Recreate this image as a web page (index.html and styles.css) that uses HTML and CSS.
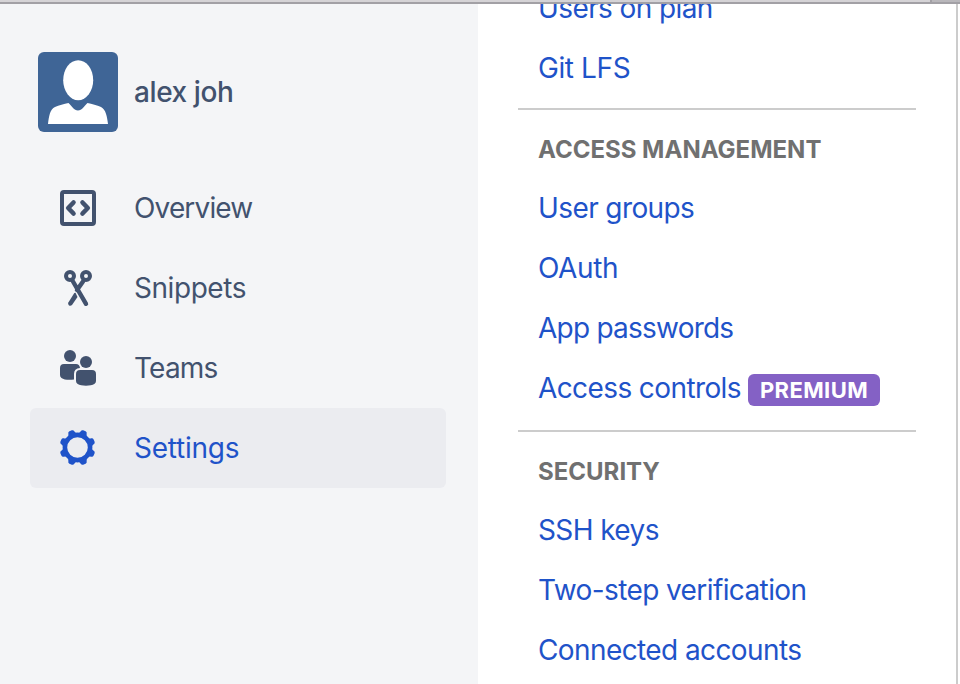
FILE: index.html
```
<!DOCTYPE html>
<html lang="en">
<head>
  <meta charset="UTF-8" />
  <meta name="viewport" content="width=device-width, initial-scale=1.0"/>
  <title>Account settings</title>
  <link rel="stylesheet" href="styles.css">
</head>
<body>
  <div class="topbar"><div class="tab"></div></div>
  <div class="page">
    <div class="sidebar">
      <div class="profile">
        <svg class="avatar" width="80" height="80" viewBox="0 0 80 80">
          <rect width="80" height="80" rx="6" fill="#3f6596"/>
          <ellipse cx="40.2" cy="28.2" rx="15" ry="20" fill="#fff"/>
          <path d="M10 72C11 64 12 57 17 55C21 53 26 52 30.500 51C34 54 36 58.500 40 58.500C44 58.500 46 54 49.500 51C54 52 59 53 63 55C68 58 69 64 70 72Z" fill="#fff"/>
        </svg>
        <span class="name">alex joh</span>
      </div>
      <ul class="nav">
        <li>
          <svg class="icon" width="48" height="48" viewBox="0 0 48 48" fill="none" stroke="currentColor" stroke-width="4">
            <rect x="8" y="8" width="32" height="32" rx="2"/>
            <path d="M19.500 18.500L14.200 24L19.500 29.500M28.500 18.500L33.800 24L28.500 29.500" stroke-width="4.600" stroke-linecap="round" stroke-linejoin="round"/>
          </svg>
          <span class="overview">Overview</span>
        </li>
        <li>
          <svg class="icon" width="48" height="48" viewBox="0 0 48 48" fill="none" stroke="currentColor" stroke-width="4" stroke-linecap="round">
            <circle cx="16" cy="12" r="4"/>
            <circle cx="32" cy="12" r="4"/>
            <path d="M19 17.500L32 39.800M29 17.500L23 26" stroke-width="4.400"/>
            <path d="M21.500 28.800L23.500 33L18 41Q16.500 42.500 14.800 41.300Q13.500 40 14.500 38.300L20.300 29Z" fill="currentColor" stroke="none"/>
          </svg>
          <span class="snippets">Snippets</span>
        </li>
        <li>
          <svg class="icon" width="48" height="48" viewBox="0 0 48 48" fill="currentColor">
            <circle cx="16" cy="12" r="6"/>
            <path d="M6 24Q6 20 10 20H22Q25.500 20 26 24Q20 24.500 20 30V35.600Q11 36.500 7.500 34Q6 33 6 31Z"/>
            <circle cx="32" cy="18" r="6"/>
            <path d="M22 30Q22 26 26 26H38Q42 26 42 30V37Q42 39 40.300 40C37 42.200 27 42.200 23.700 40Q22 39 22 37Z"/>
          </svg>
          <span class="teams">Teams</span>
        </li>
        <li class="active">
          <svg class="icon" width="48" height="48" viewBox="0 0 48 48" fill="currentColor">
            <circle cx="23.500" cy="23.500" r="12.600" fill="none" stroke="currentColor" stroke-width="4.600"/>
            <g transform="rotate(22.500 23.500 23.500)">
              <path id="tooth" d="M17 11.500Q19.900 10.500 20.300 7.300Q20.500 5.600 22.200 5.500H24.800Q26.500 5.600 26.700 7.300Q27.100 10.500 30 11.500Z"/>
              <use href="#tooth" transform="rotate(45 23.500 23.500)"/>
              <use href="#tooth" transform="rotate(90 23.500 23.500)"/>
              <use href="#tooth" transform="rotate(135 23.500 23.500)"/>
              <use href="#tooth" transform="rotate(180 23.500 23.500)"/>
              <use href="#tooth" transform="rotate(225 23.500 23.500)"/>
              <use href="#tooth" transform="rotate(270 23.500 23.500)"/>
              <use href="#tooth" transform="rotate(315 23.500 23.500)"/>
            </g>
          </svg>
          <span class="settings">Settings</span>
        </li>
      </ul>
    </div>

    <div class="content">
      <ul class="links first">
        <li><a>Users on plan</a></li>
        <li><a class="wide">Git LFS</a></li>
      </ul>
      <div class="section">
        <h2>ACCESS MANAGEMENT</h2>
        <ul class="links">
          <li><a>User groups</a></li>
          <li><a class="wide">OAuth</a></li>
          <li><a class="tight">App passwords</a></li>
          <li><a>Access controls</a><span class="badge">PREMIUM</span></li>
        </ul>
      </div>
      <div class="section">
        <h2>SECURITY</h2>
        <ul class="links">
          <li><a>SSH keys</a></li>
          <li><a>Two-step verification</a></li>
          <li><a>Connected accounts</a></li>
        </ul>
      </div>
    </div>
  </div>
</body>
</html>
```
FILE: styles.css
```
* {
  box-sizing: border-box;
}
body {
  margin: 0;
  height: 684px;
  overflow: hidden;
  display: flex;
  flex-direction: column;
  font-family: Inter, "Liberation Sans", sans-serif;
  font-size: 28px;
  background: #fff;
}
ul {
  list-style: none;
  margin: 0;
  padding: 0;
}
.topbar {
  flex: none;
  height: 4px;
  background: #d5d3d6;
  border-bottom: 2px solid #a2a0a5;
}
.tab {
  width: 30px;
  height: 2px;
  margin-left: auto;
  background: #b9b7bb;
  border-left: 2px solid #a2a0a5;
}
.page {
  display: flex;
  flex: 1;
  min-height: 0;
}

/* left navigation */
.sidebar {
  width: 478px;
  padding: 48px 32px 0 30px;
  background: #f4f5f7;
  color: #42526e;
}
.profile {
  display: flex;
  align-items: center;
  height: 80px;
  margin-bottom: 36px;
  padding-left: 8px;
}
.name {
  margin-left: 16px;
  font-weight: 500;
  letter-spacing: -0.4px;
}
.nav li {
  display: flex;
  align-items: center;
  height: 80px;
  padding-left: 24px;
  border-radius: 6px;
}
.nav span {
  margin-left: 32px;
}
.nav .overview {
  letter-spacing: -0.85px;
}
.nav .snippets {
  letter-spacing: -0.45px;
}
.nav .teams {
  letter-spacing: -0.8px;
}
.nav .settings {
  letter-spacing: -0.25px;
}
.nav .active {
  background: #ebecf0;
  color: #1f53c9;
}

/* settings menu */
.content {
  flex: 1;
  overflow: hidden;
  padding: 0 40px;
  border-right: 2px solid #ccc;
  margin-right: 2px;
}
.links {
  padding-left: 20px;
}
.first {
  margin-top: -26px;
}
.links li {
  display: flex;
  align-items: center;
  height: 60px;
  white-space: nowrap;
}
.links a {
  color: #1f53c9;
  letter-spacing: -0.6px;
}
.links .wide {
  letter-spacing: -0.4px;
}
.links .tight {
  letter-spacing: -0.77px;
}
.section {
  margin-top: 10px;
  border-top: 2px solid #ccc;
}
.section + .section {
  margin-top: 12px;
}
.section h2 {
  height: 68px;
  line-height: 80px;
  margin: 0;
  padding-left: 20px;
  font-size: 24px;
  font-weight: 700;
  color: #707070;
}
.badge {
  width: 132px;
  height: 32px;
  margin: 4px 0 0 7px;
  border-radius: 6px;
  background: #8461c5;
  color: #fff;
  font-size: 22px;
  font-weight: 700;
  letter-spacing: 0.4px;
  line-height: 32px;
  text-align: center;
}
```
